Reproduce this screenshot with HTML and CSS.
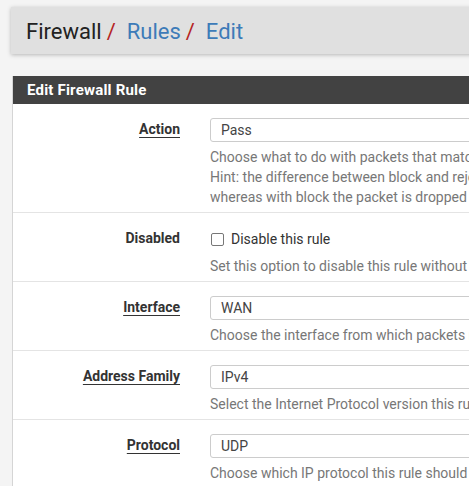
FILE: index.html
```html
<!DOCTYPE html>
<html>
<head>
<meta charset="utf-8">
<link rel="stylesheet" href="styles.css">
</head>
<body>
<div class="page">
  <div class="crumbs">
    <span class="crumb-text">Firewall</span><span class="sep">/</span>
    <a class="crumb-link">Rules</a><span class="sep">/</span>
    <a class="crumb-link">Edit</a>
  </div>
  <div class="panel">
    <div class="panel-heading">Edit Firewall Rule</div>
    <div class="panel-body">
      <div class="row">
        <div class="label"><span class="ul">Action</span></div>
        <div class="field">
          <div class="select">Pass</div>
          <div class="help">Choose what to do with packets that match the criteria specified below.<br>Hint: the difference between block and reject is that with reject, a packet (TCP RST or ICMP port unreachable for UDP) is returned to the sender,<br>whereas with block the packet is dropped silently. In either case, the original packet is discarded.</div>
        </div>
      </div>
      <div class="row">
        <div class="label plain">Disabled</div>
        <div class="field">
          <label class="check"><span class="box"></span>Disable this rule</label>
          <div class="help">Set this option to disable this rule without removing it from the list.</div>
        </div>
      </div>
      <div class="row">
        <div class="label"><span class="ul">Interface</span></div>
        <div class="field">
          <div class="select">WAN</div>
          <div class="help">Choose the interface from which packets must come to match this rule.</div>
        </div>
      </div>
      <div class="row">
        <div class="label"><span class="ul">Address Family</span></div>
        <div class="field">
          <div class="select">IPv4</div>
          <div class="help">Select the Internet Protocol version this rule applies to.</div>
        </div>
      </div>
      <div class="row">
        <div class="label"><span class="ul">Protocol</span></div>
        <div class="field">
          <div class="select">UDP</div>
          <div class="help">Choose which IP protocol this rule should match.</div>
        </div>
      </div>
    </div>
  </div>
</div>
</body>
</html>
```
FILE: styles.css
```css
html, body {
  margin: 0;
  padding: 0;
  background: #f4f4f4;
  overflow: hidden;
  font-family: Roboto, "Liberation Sans", sans-serif;
  color: #333;
}
.page {
  width: 900px;
  padding: 7px 0 0 11px;
}
.crumbs {
  background: #e0e0e0;
  height: 47px;
  box-sizing: border-box;
  padding: 2px 0 0 15px;
  display: flex;
  align-items: center;
  font-size: 22px;
  box-shadow: 0 1px 4px rgba(0,0,0,0.25);
  white-space: nowrap;
}
.crumb-text { color: #222; }
.crumb-link { color: #3d7bb8; text-decoration: none; }
.sep {
  color: #b52525;
  margin: 0 11px 0 5px;
}
.panel {
  margin: 22px 0 0 1px;
  background: #fff;
  border-left: 1px solid #d5d5d5;
}
.panel-heading {
  background: #424242;
  color: #fff;
  font-weight: bold;
  font-size: 15px;
  height: 28px;
  line-height: 28px;
  padding-left: 14px;
  letter-spacing: 0.2px;
}
.row {
  display: grid;
  grid-template-columns: 167px 1fr;
  column-gap: 30px;
  padding: 14px 0 5px;
  border-bottom: 1px solid #e4e4e4;
}
.label {
  text-align: right;
  font-weight: bold;
  font-size: 14px;
  line-height: 22px;
  color: #333;
}
.ul {
  text-decoration: underline;
  text-underline-offset: 3px;
}
.field {
  white-space: nowrap;
}
.select {
  height: 24px;
  box-sizing: border-box;
  border: 1px solid #ccc;
  border-radius: 3px;
  padding-left: 10px;
  font-size: 14px;
  line-height: 22px;
  color: #444;
  background: #fff;
}
.help {
  margin-top: 5px;
  font-size: 14px;
  line-height: 20px;
  color: #777;
}
.check {
  display: flex;
  align-items: center;
  height: 24px;
  font-size: 14px;
  color: #333;
}
.box {
  width: 11px;
  height: 11px;
  border: 1px solid #777;
  border-radius: 2px;
  margin: 0 7px 0 1px;
  background: #fff;
}
```
